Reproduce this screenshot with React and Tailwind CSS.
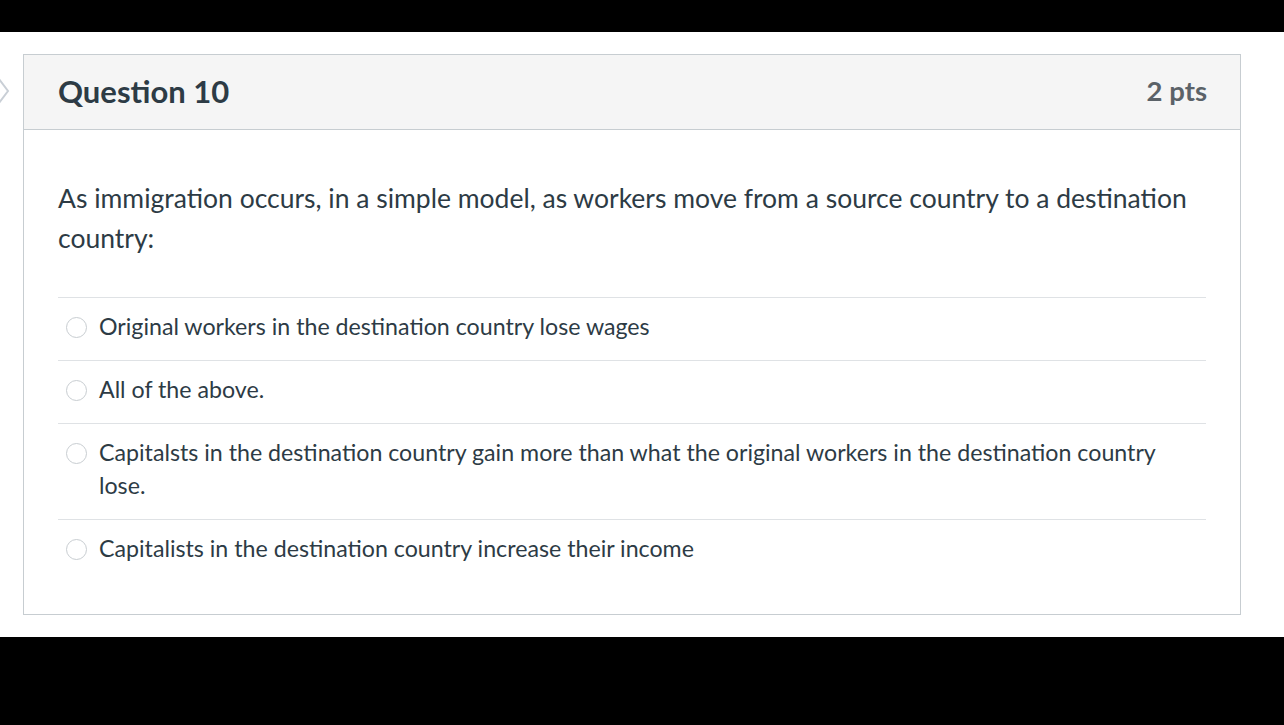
const answers = [
  'Original workers in the destination country lose wages',
  'All of the above.',
  'Capitalsts in the destination country gain more than what the original workers in the destination country lose.',
  'Capitalists in the destination country increase their income',
];

const App = () => {
  return (
    <div className="w-[1284px] h-[725px] bg-black flex flex-col font-['Lato',sans-serif] overflow-hidden">
      {/* Page area */}
      <div className="mt-[32px] h-[605px] bg-white flex relative">
        {/* Left chevron */}
        <svg className="absolute left-[-2px] top-[46px]" width="12" height="26" viewBox="0 0 12 26">
          <path d="M1 1 L10 13 L1 25" fill="none" stroke="#c9cfd6" strokeWidth="2" />
        </svg>

        <div className="ml-[23px] mt-[22px] w-[1218px] h-[561px] border border-[#c7cdd1] flex flex-col">
          {/* Header */}
          <div className="h-[75px] bg-[#f5f5f5] border-b border-[#c7cdd1] flex items-center justify-between pl-[34px] pr-[33px] pb-[2px]">
            <h2 className="text-[31px] font-bold text-[#2d3b45]">Question 10</h2>
            <div className="text-[27.5px] font-bold text-[#5b6268]">2 pts</div>
          </div>

          {/* Body */}
          <div className="px-[34px] pt-[48px]">
            <p className="text-[26.5px] leading-[40px] text-[#2d3b45]">
              As immigration occurs, in a simple model, as workers move from a source country to a destination country:
            </p>

            <div className="mt-[39px]">
              {answers.map((answer, i) => (
                <div key={i} className="flex items-start border-t border-[#dfe2e5] pt-[12px] pb-[17px] pl-[8px] pr-[40px]">
                  <span className="mt-[7px] w-[21px] h-[21px] shrink-0 rounded-full border border-[#c8cdd1] bg-white"></span>
                  <span className="ml-[12px] text-[23.2px] leading-[33px] text-[#2d3b45]">{answer}</span>
                </div>
              ))}
            </div>
          </div>
        </div>
      </div>
    </div>
  );
};

export default App;
